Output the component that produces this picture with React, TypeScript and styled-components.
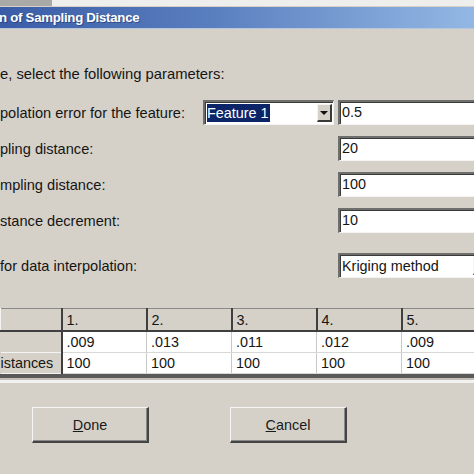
import React, { FC } from 'react'
import styled, { createGlobalStyle } from 'styled-components'

const GlobalStyle = createGlobalStyle`
  html, body {
    margin: 0;
    padding: 0;
    background: #d5d1c9;
  }
`

const face = '#d5d1c9'
const uiFont = `"Liberation Sans", Arial, sans-serif`

interface fieldRow {
  label: string,
  value: string,
}

const fieldRows: fieldRow[] = [
  { label: 'pling distance:', value: '20' },
  { label: 'mpling distance:', value: '100' },
  { label: 'stance decrement:', value: '10' },
]

const errors = ['.009', '.013', '.011', '.012', '.009']

const App: FC = () => {
  return (
    <Window>
      <GlobalStyle />
      <TopStrip>
        <TopTab />
      </TopStrip>
      <TitleBar>n of Sampling Distance</TitleBar>
      <Body>
        <Intro>e, select the following parameters:</Intro>
        <Form>
          <Label>polation error for the feature:</Label>
          <Combo>
            <ComboText>
              <Selected>Feature 1</Selected>
            </ComboText>
            <DropButton>
              <Arrow />
            </DropButton>
          </Combo>
          <TextBox>0.5</TextBox>
          {fieldRows.map(row => (
            <React.Fragment key={row.label}>
              <Label>{row.label}</Label>
              <span />
              <TextBox>{row.value}</TextBox>
            </React.Fragment>
          ))}
          <Label $extra>for data interpolation:</Label>
          <span />
          <MethodCombo $extra>
            <ComboText>Kriging method</ComboText>
            <DropButton>
              <Arrow />
            </DropButton>
          </MethodCombo>
        </Form>
        <Grid>
          <colgroup>
            <col style={{ width: 61 }} />
            {errors.map((_, i) => <col key={i} style={{ width: 85 }} />)}
          </colgroup>
          <tbody>
            <tr>
              <HeadCell />
              {errors.map((_, i) => <HeadCell key={i}>{i + 1}.</HeadCell>)}
            </tr>
            <tr>
              <SideCell />
              {errors.map((e, i) => <DataCell key={i}>{e}</DataCell>)}
            </tr>
            <tr>
              <SideCell>istances</SideCell>
              {errors.map((_, i) => <DataCell key={i}>100</DataCell>)}
            </tr>
          </tbody>
        </Grid>
        <ScrollEdge />
        <Buttons>
          <Button><u>D</u>one</Button>
          <Button><u>C</u>ancel</Button>
        </Buttons>
      </Body>
    </Window>
  )
}

const Window = styled.div`
  width: 474px;
  height: 474px;
  overflow: hidden;
  background: ${face};
  font-family: ${uiFont};
  color: #151515;
  display: flex;
  flex-direction: column;
`
const TopStrip = styled.div`
  height: 6px;
  background: #eeeeec;
  display: flex;
`
const TopTab = styled.div`
  width: 52px;
  background: #a9a9a7;
`
const TitleBar = styled.div`
  height: 21px;
  margin-top: 1px;
  background: linear-gradient(to right, #3a5ca6, #5a7fbf 45%, #93b8e4);
  color: white;
  font-weight: bold;
  font-size: 13.2px;
  letter-spacing: -0.25px;
  line-height: 21px;
  margin-left: -1px;
  white-space: nowrap;
  text-shadow: 1px 1px 0 rgba(20, 40, 90, 0.5);
  border-bottom: 1px solid #b8c6dc;
`
const Body = styled.div`
  display: flex;
  flex-direction: column;
`
const Intro = styled.div`
  font-size: 14.8px;
  line-height: 16px;
  margin-top: 37px;
  white-space: nowrap;
`
const Form = styled.div`
  display: grid;
  grid-template-columns: 199px 131px 1fr;
  column-gap: 4px;
  row-gap: 11px;
  margin-top: 18px;
  width: 520px;
  align-items: center;
`
const Label = styled.div<{ $extra?: boolean }>`
  font-size: 14.6px;
  white-space: nowrap;
  margin-top: ${p => (p.$extra ? '9px' : '0')};
`
const sunken = `
  box-sizing: border-box;
  height: 25px;
  background: white;
  border-style: solid;
  border-width: 2px 1px 1px 2px;
  border-color: #6e6e6c #f4f4f2 #f4f4f2 #6e6e6c;
  box-shadow: inset 1px 1px 0 #3a3a3a;
`
const TextBox = styled.div`
  ${sunken}
  font-size: 14.4px;
  line-height: 21px;
  padding-left: 2px;
`
const Combo = styled.div`
  ${sunken}
  display: flex;
  align-items: stretch;
  padding: 2px 1px 2px 2px;
`
const MethodCombo = styled(Combo)<{ $extra?: boolean }>`
  width: 152px;
  margin-top: ${p => (p.$extra ? '9px' : '0')};
`
const ComboText = styled.div`
  flex: 1;
  font-size: 14.4px;
  line-height: 19px;
  white-space: nowrap;
  overflow: hidden;
`
const Selected = styled.span`
  background: #0c2568;
  color: white;
  padding: 1px 1px 1px 0;
`
const DropButton = styled.div`
  width: 15px;
  box-sizing: border-box;
  background: ${face};
  border-style: solid;
  border-width: 1px 2px 2px 1px;
  border-color: #f4f4f2 #3a3a3a #3a3a3a #f4f4f2;
  display: flex;
  align-items: center;
  justify-content: center;
`
const Arrow = styled.div`
  width: 0;
  height: 0;
  border-left: 4px solid transparent;
  border-right: 4px solid transparent;
  border-top: 4px solid #111;
`
const Grid = styled.table`
  margin-top: 30px;
  border-collapse: collapse;
  table-layout: fixed;
  width: 486px;
  font-size: 14.4px;
  border-top: 1px solid #8a8a88;
`
const HeadCell = styled.td`
  height: 21px;
  padding: 0 0 0 4px;
  background: ${face};
  border-right: 2px solid #3f3f3f;
  border-bottom: 2px solid #3f3f3f;
  border-left: 1px solid #f4f4f2;
`
const SideCell = styled.td`
  height: 20px;
  padding: 0 8px 0 0;
  text-align: right;
  background: ${face};
  border-right: 2px solid #3f3f3f;
  border-bottom: 1px solid #f4f4f2;
`
const DataCell = styled.td`
  height: 20px;
  padding: 0 0 0 4px;
  background: white;
  border-right: 1px solid #c8c8c6;
  border-bottom: 1px solid #d8d8d6;
`
const ScrollEdge = styled.div`
  height: 4px;
  background: #5a5a58;
  border-bottom: 2px solid #c4c0b8;
  box-shadow: 0 3px 0 #f2f2f0;
`
const Buttons = styled.div`
  display: flex;
  gap: 81px;
  padding-left: 32px;
  margin-top: 27px;
`
const Button = styled.button`
  width: 117px;
  height: 36px;
  background: ${face};
  font-family: ${uiFont};
  font-size: 14.4px;
  color: #1a1a1a;
  border-style: solid;
  border-width: 1px 2px 2px 1px;
  border-color: #f6f6f4 #444 #444 #f6f6f4;
  box-shadow: inset -1px -1px 0 #8a8a88;
  padding: 0;
`

export default App
